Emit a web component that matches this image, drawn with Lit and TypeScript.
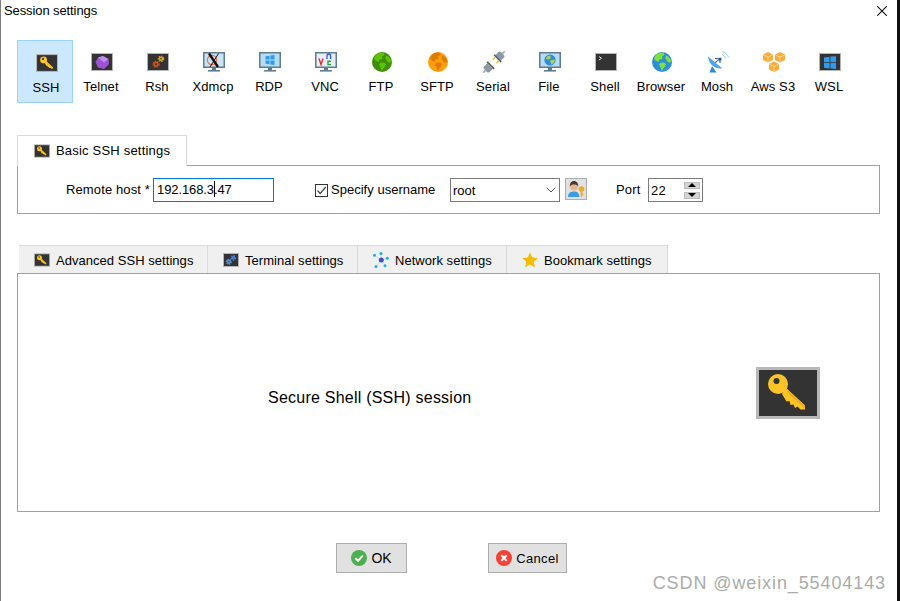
import { LitElement, html, css, svg } from "lit";
import { customElement } from "lit/decorators.js";

const frame = (inner: unknown) => html`<svg width="22" height="18" viewBox="0 0 22 18"><rect x=".5" y=".5" width="21" height="17" fill="#333" stroke="#b5b5b5"/>${inner}</svg>`;

const keyShape = svg`
  <path d="M30 21 L49 38.5 V42.5 H44.5 L41.5 39.5 L39 41 L37.5 37.5 L34.5 38 L33.5 34 L30.5 34.5 L26 27Z" fill="#fdc425"/>
  <path d="M30 21 L49 38.5 V42 L33 27Z" fill="#f2ac1d"/>
  <circle cx="22" cy="17" r="10" fill="#fdc425"/>
  <circle cx="20.5" cy="14" r="3" fill="#333"/>`;

const smallKey = (w = 22, h = 18) => html`<svg width=${w} height=${h} viewBox="0 0 64 52"><rect x="1.5" y="1.5" width="61" height="49" fill="#333" stroke="#b5b5b5" stroke-width="3"/>${keyShape}</svg>`;

const gear = (x: number, y: number, c: string, r = 2.2) => svg`
  <circle cx=${x} cy=${y} r=${r} fill="none" stroke=${c} stroke-width="1.6"/>
  <circle cx=${x} cy=${y} r=${r + 1.1} fill="none" stroke=${c} stroke-width="1.2" stroke-dasharray="1.4 1.1"/>`;

const winLogo = (x: number, y: number, s: number) => {
  const p = s / 2 - 0.4;
  const q = s / 2 + 0.4;
  return svg`<path fill="#2f9bef" d="M${x} ${y + 0.8}L${x + p} ${y + 0.2}V${y + p}H${x}Z M${x + q} ${y}L${x + s} ${y - 0.4}V${y + p}H${x + q}Z M${x} ${y + q}H${x + p}V${y + s - 0.2}L${x} ${y + s - 0.8}Z M${x + q} ${y + q}H${x + s}V${y + s + 0.4}L${x + q} ${y + s}Z"/>`;
};

const monitor = (screen: string, inner: unknown) => html`<svg width="22" height="20" viewBox="0 0 22 20">
  <rect x=".75" y=".75" width="20.5" height="14.5" fill=${screen} stroke="#5f7d8c" stroke-width="1.5"/>
  <rect x="9" y="16" width="4" height="2" fill="#5f7d8c"/>
  <rect x="5" y="18" width="12" height="1.6" fill="#5f7d8c"/>
  ${inner}</svg>`;

const globe = (sea: string, land: string, size = 22) => html`<svg width=${size} height=${size} viewBox="0 0 22 22">
  <circle cx="11" cy="11" r="10" fill=${sea}/>
  <path fill=${land} d="M5 3.5C7 2 10 1.2 12.5 1.6L13.5 4 11 5.5 11.5 8 8.5 8.5 7.5 11 4.5 9.5 3 7.5Z M9 12C11 11 14 11.5 15 13L14 15.5 12 18 10.5 20 9.5 16 8 14Z M15 4.5C17 5 19.5 7.5 20.5 10.5L18 12 15.5 9.5 14.5 7Z"/>
</svg>`;

const cube = (x: number, y: number) => svg`
  <path d="M${x} ${y + 2.6}L${x + 5} ${y}L${x + 10} ${y + 2.6}V${y + 8}L${x + 5} ${y + 10.6}L${x} ${y + 8}Z" fill="#f9ab3c"/>
  <path d="M${x} ${y + 2.6}L${x + 5} ${y + 5.2}L${x + 10} ${y + 2.6}M${x + 5} ${y + 5.2}V${y + 10.6}" fill="none" stroke="#ffe0ae" stroke-width=".8"/>`;

const TOOLS: [string, unknown][] = [
  ["SSH", smallKey()],
  ["Telnet", frame(svg`<path d="M12 3L17.5 6 18 11 13 16 7 14.5 4.5 9 7 4.5Z" fill="#9c52d6"/><path d="M12 3L17.5 6 13 9.5 7 4.5Z" fill="#c48aee"/>`)],
  ["Rsh", frame(svg`${gear(9, 11.3, "#d8500f", 1.9)}${gear(14, 5.8, "#dca01e", 1.6)}`)],
  ["Xdmcp", monitor("#c9e4f6", svg`<circle cx="9" cy="8" r="4.6" fill="none" stroke="#e2704a" stroke-width="1.2"/><path d="M6 1.5L15 15" stroke="#111" stroke-width="2.4"/><path d="M15.5 1.5L7 15" stroke="#111" stroke-width="1"/>`)],
  ["RDP", monitor("#b5dcf6", winLogo(6.5, 3.5, 9))],
  ["VNC", monitor("#e6eff5", svg`<path d="M4 6.5L6 12.5 8 6.5" fill="none" stroke="#e0303a" stroke-width="1.4"/><path d="M12 7V3.8A1.8 1.8 0 0 1 15.6 3.8V7" fill="none" stroke="#2f50e8" stroke-width="1.3"/><path d="M16 9.2H13V12.6H16" fill="none" stroke="#1ea838" stroke-width="1.4"/>`)],
  ["FTP", globe("#3f8f04", "#5fc305")],
  ["SFTP", globe("#ff9d0b", "#dd7d08")],
  ["Serial", html`<svg width="22" height="22" viewBox="0 0 22 22"><g transform="rotate(45 11 11)">
    <path d="M11 -4V-1" stroke="#9aa5ad" stroke-width="1.6"/>
    <path d="M7 5V1.5A2 2 0 0 1 9 -1H13A2 2 0 0 1 15 1.5V5Z" fill="#8d9aa3"/>
    <rect x="6" y="5" width="10" height="1.6" fill="#4d5a62"/>
    <path d="M8.5 7V10M13.5 7V10" stroke="#f5c53a" stroke-width="1.8"/>
    <path d="M8.5 12V15M13.5 12V15" stroke="#f8f0d0" stroke-width="1.8"/>
    <rect x="6" y="15" width="10" height="1.6" fill="#4d5a62"/>
    <path d="M7 16.6V20.5A2 2 0 0 0 9 23H13A2 2 0 0 0 15 20.5V16.6Z" fill="#8d9aa3"/>
    <path d="M11 23V26" stroke="#9aa5ad" stroke-width="1.6"/>
  </g></svg>`],
  ["File", monitor("#b5dcf6", svg`<circle cx="11" cy="8" r="5.6" fill="#2e8fd8"/><path d="M8 4.5L11 3.5 12 6 9.5 7.5 7 7Z M11 8.5L15.5 7.5 15.5 10.5 12.5 12.5Z" fill="#b6d44a"/>`)],
  ["Shell", frame(svg`<path d="M4 3.5L6.5 5.2 4 7" fill="none" stroke="#eee" stroke-width=".9"/>`)],
  ["Browser", globe("#2b8fdc", "#7fe03a")],
  ["Mosh", html`<svg width="22" height="22" viewBox="0 0 22 22">
    <path d="M5 15L9.5 21.5H2.5Z" fill="#2f86d8"/>
    <path d="M1 5.5C1.5 12 6.5 18.5 15.5 17.5Z" fill="#4fa3e8"/>
    <path d="M8 11.5L13 8M13 8L13 12M8 7.5L13 8" stroke="#1f4a7a" stroke-width="1" fill="none"/>
    <rect x="11.8" y="6.8" width="2.6" height="2.6" fill="#1f4f96"/>
    <path d="M15 3.5C16.6 4 18 5.4 18.6 7.2M15.5 .6C18.2 1.4 20.6 3.6 21.6 6.4" fill="none" stroke="#8cc8f0" stroke-width="1"/>
  </svg>`],
  ["Aws S3", html`<svg width="22" height="20" viewBox="0 0 22 20">${cube(0, 0)}${cube(12, 0)}${cube(6, 9.4)}</svg>`],
  ["WSL", frame(winLogo(5, 3.6, 12))],
];

const LOWER_TABS: [string, unknown, string][] = [
  ["Advanced SSH settings", smallKey(16, 14), "w189"],
  ["Terminal settings", html`<svg width="16" height="14" viewBox="0 0 16 14"><rect x=".5" y=".5" width="15" height="13" fill="#333" stroke="#b5b5b5"/>${gear(5.8, 8.8, "#4f8fe0", 1.4)}${gear(10.4, 4.8, "#4f7fd0", 1.2)}</svg>`, "w150"],
  ["Network settings", html`<svg width="16" height="16" viewBox="0 0 16 16">
    <path d="M8.3 8L1 3M8.3 8L8 1.3M8.3 8L14.3 6.3M8.3 8L12 13.7M8.3 8L3 14.7" stroke="#9fc8e0" stroke-width=".5"/>
    <circle cx="1.5" cy="3.2" r="1.5" fill="#1ab2d6"/><circle cx="8" cy="1.6" r="1.5" fill="#1ab2d6"/><circle cx="14.3" cy="6.3" r="1.5" fill="#1ab2d6"/><circle cx="12" cy="13.7" r="1.5" fill="#1ab2d6"/><circle cx="3" cy="14.5" r="1.5" fill="#1ab2d6"/>
    <circle cx="8.3" cy="8" r="2.5" fill="#3f51b5"/></svg>`, "w149"],
  ["Bookmark settings", html`<svg width="16" height="16" viewBox="0 0 16 16"><path d="M8 .5L10.3 5.5 15.8 6.1 11.7 9.8 12.9 15.3 8 12.5 3.1 15.3 4.3 9.8 .2 6.1 5.7 5.5Z" fill="#f5bb00"/></svg>`, "w161"],
];

@customElement("app-root")
export class AppRoot extends LitElement {
  static styles = css`
    :host { display: block; width: 900px; height: 601px; position: relative; overflow: hidden; background: #fff; color: #000; font: 13px "Liberation Sans", Arial, sans-serif; letter-spacing: .2px; }
    svg { display: block; flex: none; }
    .window { box-sizing: border-box; height: 601px; border-left: 1px solid #7d7d7d; border-right: 3px solid #101010; padding: 0 17px 0 16px; }
    .titlebar { height: 40px; margin-left: -13px; margin-right: -7px; display: flex; justify-content: space-between; align-items: flex-start; font-size: 13px; letter-spacing: -.1px; }
    .title { line-height: 21px; }
    .close { margin-top: 6px; }
    .tools { display: grid; grid-template-columns: repeat(15, 56px); height: 63px; }
    .tool { box-sizing: border-box; height: 63px; display: flex; flex-direction: column; align-items: center; padding-top: 11px; border: 1px solid transparent; }
    .tool.on { background: #cce8ff; border-color: #99d1ff; padding: 12px 0 0 2px; }
    .tool-icon { height: 22px; margin-top: -1px; padding-left: 2px; display: flex; align-items: center; justify-content: center; }
    .tool-label { margin-top: 6px; line-height: 16px; white-space: nowrap; letter-spacing: .1px; }
    .basic-tab { box-sizing: border-box; margin-top: 32px; width: 170px; height: 31px; position: relative; z-index: 1; margin-bottom: -1px; background: #fff; border: 1px solid #d9d9d9; border-bottom: none; display: flex; align-items: center; gap: 6px; padding-left: 16px; }
    .basic-tab span { padding-bottom: 2px; }
    .basic-panel { box-sizing: border-box; height: 49px; border: 1px solid #a0a0a0; padding: 12px 0 0 48px; display: flex; align-items: flex-start; }
    .row-text { line-height: 23px; white-space: nowrap; }
    .lbl-host { width: 87px; letter-spacing: .12px; }
    .field { box-sizing: border-box; height: 24px; line-height: 21px; background: #fff; white-space: nowrap; }
    .host { width: 121px; border: 1px solid #0078d7; padding-left: 3px; letter-spacing: -.1px; }
    .caret { display: inline-block; width: 1px; height: 16px; background: #000; margin-right: -1px; vertical-align: -3px; }
    .check { box-sizing: border-box; width: 13px; height: 13px; margin: 6px 3px 0 41px; border: 1px solid #333; }
    .lbl-user { width: 119px; letter-spacing: .02px; }
    .combo { width: 110px; border: 1px solid #7a7a7a; padding-left: 2px; display: flex; justify-content: space-between; align-items: center; letter-spacing: 0; }
    .chev { margin-right: 3px; }
    .userbtn { box-sizing: border-box; width: 22px; height: 22px; margin-left: 5px; background: #e1e1e1; border: 1px solid #adadad; }
    .lbl-port { width: 32px; margin-left: 29px; }
    .spin { width: 55px; border: 1px solid #7a7a7a; padding-left: 2px; display: flex; justify-content: space-between; align-items: center; }
    .spin-btns { display: flex; flex-direction: column; gap: 3px; margin-right: 2px; }
    .spin-btn { box-sizing: border-box; width: 16px; height: 7px; background: #d4d4d4; border: 1px solid #bcbcbc; display: flex; align-items: center; justify-content: center; }
    .tabs { display: flex; margin: 31px 0 0 2px; height: 28px; }
    .tab { box-sizing: border-box; height: 28px; background: #f0f0f0; border-top: 1px solid #dcdcdc; border-right: 1px solid #d9d9d9; display: flex; align-items: center; gap: 6px; padding-left: 15px; white-space: nowrap; letter-spacing: .04px; }
    .tab span { padding-top: 2px; }
    .w189 { width: 189px; }
    .w150 { width: 150px; }
    .w149 { width: 149px; }
    .w161 { width: 161px; }
    .main-panel { box-sizing: border-box; height: 239px; border: 1px solid #a0a0a0; display: flex; align-items: center; padding: 0 59px 0 250px; justify-content: space-between; }
    .desc { font-size: 16px; letter-spacing: .23px; padding-top: 11px; }
    .actions { display: flex; margin: 31px 0 0 319px; gap: 81px; }
    .btn { box-sizing: border-box; height: 30px; background: #e1e1e1; border: 1px solid #adadad; display: flex; align-items: center; justify-content: center; gap: 4px; font-size: 14px; letter-spacing: 0; }
    .cancel span { font-size: 13px; letter-spacing: .3px; }
    .ok { width: 71px; }
    .cancel { width: 79px; }
    .watermark { position: absolute; right: 14px; top: 573px; font-size: 18px; letter-spacing: .9px; color: #ababab; white-space: nowrap; }
  `;

  render() {
    return html`
      <div class="window">
        <div class="titlebar">
          <span class="title">Session settings</span>
          <svg class="close" width="10" height="10" viewBox="0 0 10 10"><path d="M.3 .3L9.7 9.7M9.7 .3L.3 9.7" stroke="#111" stroke-width="1.1"/></svg>
        </div>
        <div class="tools">
          ${TOOLS.map(([n, ic], i) => html`<div class="tool ${i === 0 ? "on" : ""}"><div class="tool-icon">${ic}</div><div class="tool-label">${n}</div></div>`)}
        </div>
        <div class="basic-tab">${smallKey(16, 14)}<span>Basic SSH settings</span></div>
        <div class="basic-panel">
          <span class="row-text lbl-host">Remote host *</span>
          <div class="field host">192.168.3<span class="caret"></span>.47</div>
          <div class="check"><svg width="11" height="11" viewBox="0 0 11 11"><path d="M1.5 5.5L4.2 8.5 9.8 2" fill="none" stroke="#444" stroke-width="1.2"/></svg></div>
          <span class="row-text lbl-user">Specify username</span>
          <div class="field combo"><span>root</span><svg class="chev" width="10" height="6" viewBox="0 0 10 6"><path d="M.7 .7L5 5 9.3 .7" fill="none" stroke="#555"/></svg></div>
          <div class="userbtn"><svg width="20" height="20" viewBox="0 0 20 20">
            <path d="M2 18C2 13.5 5 12.5 8 12.5S13 13.5 13.5 18Z" fill="#3d9be0"/>
            <circle cx="8" cy="7.5" r="4" fill="#e8b48c"/>
            <path d="M3.8 7.5C3.5 3.5 6 2 8 2S12.5 3.5 12.2 7.5C11 5.5 9 5.5 7.5 5.5 6 5.5 5 6 3.8 7.5Z" fill="#4a3a30"/>
            <circle cx="15.5" cy="10" r="2.8" fill="#f5a623"/>
            <path d="M14.6 11V17L15.5 18 16.5 17V16H17.3V14.8H16.5V11Z" fill="#f5a623"/>
          </svg></div>
          <span class="row-text lbl-port">Port</span>
          <div class="field spin"><span>22</span>
            <div class="spin-btns">
              <div class="spin-btn"><svg width="8" height="4" viewBox="0 0 8 4"><path d="M4 0L8 4H0Z" fill="#000"/></svg></div>
              <div class="spin-btn"><svg width="8" height="4" viewBox="0 0 8 4"><path d="M0 0H8L4 4Z" fill="#000"/></svg></div>
            </div>
          </div>
        </div>
        <div class="tabs">
          ${LOWER_TABS.map(([n, ic, w]) => html`<div class="tab ${w}">${ic}<span>${n}</span></div>`)}
        </div>
        <div class="main-panel">
          <span class="desc">Secure Shell (SSH) session</span>
          <svg width="64" height="52" viewBox="0 0 64 52"><rect x="1.5" y="1.5" width="61" height="49" fill="#333" stroke="#b8b8b8" stroke-width="3"/>${keyShape}</svg>
        </div>
        <div class="actions">
          <div class="btn ok"><svg width="16" height="16" viewBox="0 0 16 16"><circle cx="8" cy="8" r="8" fill="#4caf50"/><path d="M4.3 8.2L7 10.8 11.8 5.6" fill="none" stroke="#fff" stroke-width="1.9"/></svg><span>OK</span></div>
          <div class="btn cancel"><svg width="16" height="16" viewBox="0 0 16 16"><circle cx="8" cy="8" r="8" fill="#f44336"/><path d="M5.3 5.3L10.7 10.7M10.7 5.3L5.3 10.7" stroke="#fff" stroke-width="2"/></svg><span>Cancel</span></div>
        </div>
      </div>
      <div class="watermark">CSDN @weixin_55404143</div>
    `;
  }
}
